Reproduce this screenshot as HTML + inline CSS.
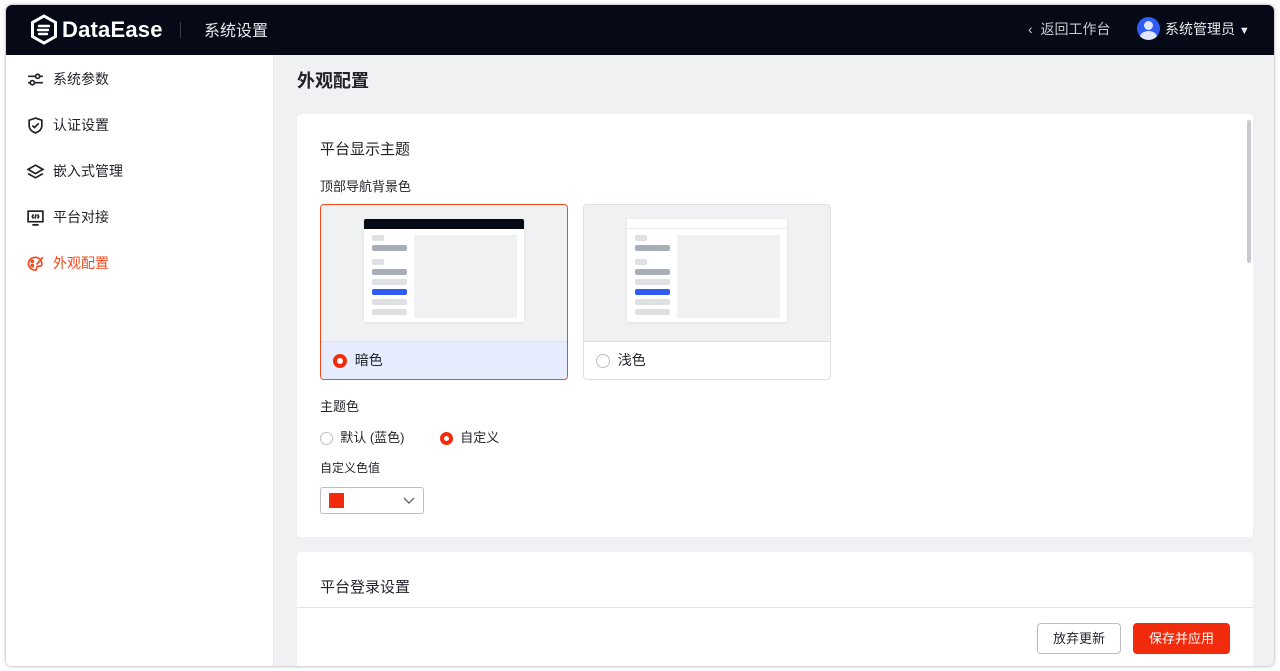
<!DOCTYPE html>
<html><head><meta charset="utf-8"><style>
*{box-sizing:border-box;margin:0;padding:0}
body{width:1280px;height:671px;background:#fff;font-family:"Liberation Sans","Noto Sans CJK SC",sans-serif;position:relative;overflow:hidden;color:#1f2329}
.win{position:absolute;left:6px;top:5px;width:1268px;height:661px;border-radius:6px;overflow:hidden;background:#f0f1f3;box-shadow:0 0 3px rgba(0,0,0,.4)}
.hdr{position:absolute;left:0;top:0;width:1268px;height:50px;background:#050a16;color:#fff}
.side{position:absolute;left:0;top:50px;width:268px;height:611px;background:#fff;border-right:1px solid #e6e8eb}
.mi{position:absolute;left:20px;font-size:14px;color:#1f2329;display:flex;align-items:center;gap:8px}
.mi svg{width:19px;height:19px}
.abs{position:absolute}
.card{position:absolute;background:#fff;border-radius:4px}
.radio{display:inline-block;width:14px;height:14px;border-radius:50%;border:1px solid #bbbfc4;background:#fff;vertical-align:middle}
.radio.on{border:4px solid #f22b0c}
.th{position:absolute;width:248px;height:176px;border:1px solid #dee0e3;border-radius:4px;overflow:hidden;background:#fff}
.th .pv{height:137px;background:#f0f1f3;border-bottom:1px solid #dee0e3;position:relative}
.mock{position:absolute;left:43px;top:14px;width:160px;height:103px;background:#fff;border-radius:2px;box-shadow:0 1px 3px rgba(0,0,0,.08)}
.bar{position:absolute;left:8px;height:6px;border-radius:2px;background:#dee0e3}
</style></head><body>
<div class="win">
 <div class="hdr">
  <svg class="abs" style="left:24px;top:9px" width="28" height="31" viewBox="0 0 28 31"><path d="M14 2 L25.5 8.5 V22.5 L14 29 L2.5 22.5 V8.5 Z" fill="none" stroke="#fff" stroke-width="3"/><path d="M9 12h10M8 16h10M9 20h8" stroke="#fff" stroke-width="2.4" stroke-linecap="round"/></svg>
  <div class="abs" style="left:56px;top:12px;font-size:22px;font-weight:bold;letter-spacing:.2px">DataEase</div>
  <div class="abs" style="left:174px;top:17px;width:1px;height:16px;background:#3a3f4a"></div>
  <div class="abs" style="left:198px;top:12px;font-size:16px;color:#e8e9eb">系统设置</div>
  <div class="abs" style="left:1022px;top:14px;font-size:14px;color:#c8cacf">‹&nbsp; 返回工作台</div>
  <div class="abs" style="left:1131px;top:12px;width:23px;height:23px;border-radius:50%;background:#2f5cf5;overflow:hidden"><div class="abs" style="left:7px;top:4px;width:9px;height:9px;border-radius:50%;background:#dfe6ff"></div><div class="abs" style="left:3px;top:14px;width:17px;height:12px;border-radius:50%;background:#dfe6ff"></div></div>
  <div class="abs" style="left:1159px;top:14px;font-size:14px;color:#e8e9eb">系统管理员 <span style="font-size:11px">▼</span></div>
 </div>
 <div class="side">
  <div class="mi" style="top:14px"><svg viewBox="0 0 18 18" fill="none" stroke="#1f2329" stroke-width="1.6"><path d="M2 6h14M2 12h14"/><circle cx="11" cy="6" r="2" fill="#fff"/><circle cx="6" cy="12" r="2" fill="#fff"/></svg>系统参数</div>
  <div class="mi" style="top:60px"><svg viewBox="0 0 18 18" fill="none" stroke="#1f2329" stroke-width="1.6"><path d="M9 2l6 2v5c0 4-3 6-6 7-3-1-6-3-6-7V4z"/><path d="M6 9l2 2 4-4"/></svg>认证设置</div>
  <div class="mi" style="top:106px"><svg viewBox="0 0 18 18" fill="none" stroke="#1f2329" stroke-width="1.6"><path d="M9 3l7 4-7 4-7-4z"/><path d="M2 11l7 4 7-4"/></svg>嵌入式管理</div>
  <div class="mi" style="top:152px"><svg viewBox="0 0 18 18" fill="none" stroke="#1f2329" stroke-width="1.6"><rect x="2" y="3" width="14" height="10"/><path d="M6 16h6M7 6l-1 2 1 2M11 6l1 2-1 2M9.5 6l-1 4"/></svg>平台对接</div>
  <div class="mi" style="top:198px;color:#f24a1d"><svg viewBox="0 0 18 18" fill="none" stroke="#f24a1d" stroke-width="1.6"><path d="M14 6C12 2 4 2 2.5 8c-1 5 4 8 7 7 1-.5 0-2 1-3s3 0 4-1c1-1 .5-3-.5-5z"/><circle cx="6" cy="7" r="1"/><circle cx="6" cy="11" r="1"/><path d="M16 3l-6 7"/></svg>外观配置</div>
 </div>
 <div class="abs" style="left:291px;top:62px;font-size:18px;font-weight:bold">外观配置</div>
 <div class="card" style="left:291px;top:109px;width:956px;height:423px">
  <div class="abs" style="left:23px;top:24px;font-size:15px">平台显示主题</div>
  <div class="abs" style="left:23px;top:62px;font-size:13px;color:#1f2329">顶部导航背景色</div>
  <div class="th" style="left:23px;top:90px;border-color:#f24a1d">
   <div class="pv"><div class="mock"><div style="height:10px;background:#050a16;border-radius:2px 2px 0 0"></div>
    <div class="bar" style="top:16px;width:12px"></div><div class="bar" style="top:26px;width:35px;background:#a8aeb7"></div><div class="bar" style="top:40px;width:12px"></div><div class="bar" style="top:50px;width:35px;background:#a8aeb7"></div><div class="bar" style="top:60px;width:35px"></div><div class="bar" style="top:70px;width:35px;background:#2f5cf5"></div><div class="bar" style="top:80px;width:35px"></div><div class="bar" style="top:90px;width:35px"></div>
    <div class="abs" style="left:50px;top:16px;width:103px;height:83px;background:#f0f1f3"></div></div></div>
   <div style="height:39px;background:#e6ecfd;padding:8px 12px;font-size:14px"><span class="radio on"></span>&nbsp; 暗色</div>
  </div>
  <div class="th" style="left:286px;top:90px">
   <div class="pv"><div class="mock"><div style="height:10px;border-bottom:1px solid #eee"></div>
    <div class="bar" style="top:16px;width:12px"></div><div class="bar" style="top:26px;width:35px;background:#a8aeb7"></div><div class="bar" style="top:40px;width:12px"></div><div class="bar" style="top:50px;width:35px;background:#a8aeb7"></div><div class="bar" style="top:60px;width:35px"></div><div class="bar" style="top:70px;width:35px;background:#2f5cf5"></div><div class="bar" style="top:80px;width:35px"></div><div class="bar" style="top:90px;width:35px"></div>
    <div class="abs" style="left:50px;top:16px;width:103px;height:83px;background:#f0f1f3"></div></div></div>
   <div style="height:39px;padding:8px 12px;font-size:14px"><span class="radio"></span>&nbsp; 浅色</div>
  </div>
  <div class="abs" style="left:23px;top:282px;font-size:13px">主题色</div>
  <div class="abs" style="left:23px;top:313px;font-size:13px"><span class="radio" style="width:13px;height:13px"></span>&nbsp; 默认 (蓝色)</div>
  <div class="abs" style="left:143px;top:313px;font-size:13px"><span class="radio on" style="width:13px;height:13px"></span>&nbsp; 自定义</div>
  <div class="abs" style="left:23px;top:345px;font-size:12px">自定义色值</div>
  <div class="abs" style="left:23px;top:373px;width:104px;height:27px;border:1px solid #bbbfc4;border-radius:3px"><div class="abs" style="left:8px;top:5px;width:15px;height:15px;background:#f22b0c"></div><svg class="abs" style="left:82px;top:8px" width="12" height="9"><path d="M1 2l5 5 5-5" stroke="#646a73" stroke-width="1.4" fill="none"/></svg></div>
  <div class="abs" style="left:950px;top:6px;width:4px;height:143px;background:#c8cacf;border-radius:2px"></div>
 </div>
 <div class="card" style="left:291px;top:547px;width:956px;height:120px;border-radius:4px 4px 0 0">
  <div class="abs" style="left:23px;top:24px;font-size:15px">平台登录设置</div>
  <div class="abs" style="left:0;top:55px;width:956px;height:1px;background:#e1e3e6"></div>
  <div class="abs" style="left:740px;top:71px;width:84px;height:31px;border:1px solid #bbbfc4;border-radius:4px;font-size:13px;text-align:center;line-height:29px">放弃更新</div>
  <div class="abs" style="left:836px;top:71px;width:97px;height:31px;background:#f22b0c;border-radius:4px;font-size:13px;color:#fff;text-align:center;line-height:31px">保存并应用</div>
 </div>
</div>
</body></html>
